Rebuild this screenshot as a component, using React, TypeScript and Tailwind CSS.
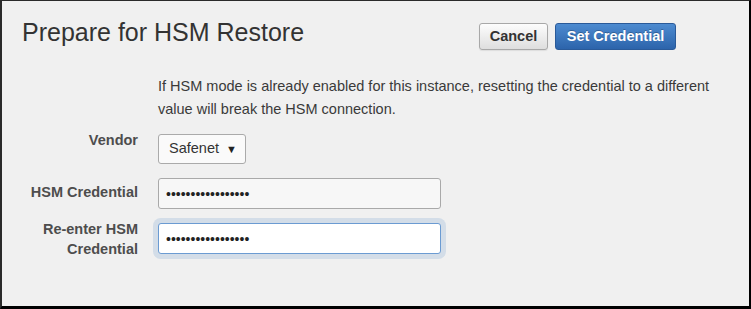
import React from 'react';

const labelCls = "w-[136px] shrink-0 text-right text-[14.5px] leading-[20px] font-bold text-[#4d4d4d]";

const App: React.FC = () => {
  return (
    <div className="w-[751px] h-[309px] bg-[#f0f0f0] border-l-2 border-t border-r-2 border-b-[3px] border-l-[#2a2a2a] border-t-[#2a2a2a] border-r-black border-b-black font-['Liberation_Sans',Arial,sans-serif] text-[#333] overflow-hidden">
      <div className="flex items-start justify-between pl-[20px] pr-[73px] pt-[17px]">
        <h1 className="text-[25px] leading-[28px] text-[#333]">Prepare for HSM Restore</h1>
        <div className="flex gap-[7px] mt-[5px]">
          <button className="h-[27px] w-[69px] rounded-[3px] border border-[#a8a8a8] bg-gradient-to-b from-[#fdfdfd] to-[#dedede] text-[14.5px] font-bold text-[#333] shadow-[0_1px_1px_rgba(0,0,0,0.08)]">
            Cancel
          </button>
          <button className="h-[27px] w-[121px] rounded-[3px] border border-[#2a5a99] bg-gradient-to-b from-[#4d8bd0] to-[#2c64ab] text-[14.5px] font-bold text-white [text-shadow:0_-1px_0_rgba(0,0,0,0.25)]">
            Set Credential
          </button>
        </div>
      </div>

      <p className="ml-[156px] mt-[25px] w-[565px] text-[14.5px] leading-[23px] text-[#3a3a3a]">
        If HSM mode is already enabled for this instance, resetting the credential to a different value will break the HSM connection.
      </p>

      <div className="flex items-start gap-[20px] mt-[9px]">
        <label className={labelCls}>Vendor</label>
        <div className="mt-[4px] h-[30px] w-[88px] rounded-[3px] border border-[#aaa] bg-[#fafafa] flex items-center justify-between pl-[10px] pr-[8px]">
          <span className="text-[14.5px] text-[#333]">Safenet</span>
          <span className="text-[11px] text-[#222]">▼</span>
        </div>
      </div>

      <div className="flex items-start gap-[20px] mt-[14px]">
        <label className={`${labelCls} mt-[4px]`}>HSM Credential</label>
        <input
          type="password"
          readOnly
          value="aaaaaaaaaaaaaaaaa"
          className="h-[31px] w-[283px] rounded-[3px] border border-[#a9a9a9] bg-[#f7f7f7] px-[7px] text-[14px] text-[#222] outline-none font-['Liberation_Sans',Arial,sans-serif]"
        />
      </div>

      <div className="flex items-start gap-[20px] mt-[10px]">
        <label className={labelCls}>Re-enter HSM<br />Credential</label>
        <input
          type="password"
          readOnly
          value="aaaaaaaaaaaaaaaaa"
          className="mt-[4px] h-[31px] w-[283px] rounded-[3px] border border-[#6b9bd2] bg-white px-[7px] text-[14px] text-[#222] outline-none shadow-[0_0_0_5px_#d3dde8] font-['Liberation_Sans',Arial,sans-serif]"
        />
      </div>
    </div>
  );
};

export default App;
